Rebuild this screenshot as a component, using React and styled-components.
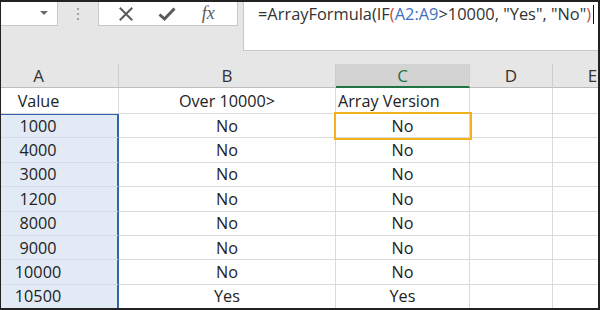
import React from "react";
import styled, { createGlobalStyle, css } from "styled-components";

const Global = createGlobalStyle`
  html, body { margin: 0; padding: 0; background: #ffffff; }
  * { box-sizing: border-box; }
`;

const Frame = styled.div`
  width: 600px;
  height: 310px;
  overflow: hidden;
  border-style: solid;
  border-color: #222;
  border-width: 2px 2px 2px 1px;
  background: #e6e6e6;
  font-family: "Open Sans", "Noto Sans", sans-serif;
  display: flex;
  flex-direction: column;
`;

const Toolbar = styled.div`
  height: 62px;
  flex: none;
  display: flex;
  align-items: flex-start;
  background: #e6e6e6;
`;

const NameBox = styled.div`
  width: 57px;
  height: 24px;
  background: #fff;
  border-right: 1px solid #c8c8c8;
  border-bottom: 1px solid #c8c8c8;
  display: flex;
  align-items: center;
  justify-content: flex-end;
  padding-right: 9px;
`;

const Caret = styled.span`
  width: 0;
  height: 0;
  border-left: 4px solid transparent;
  border-right: 4px solid transparent;
  border-top: 4px solid #6a6a6a;
  margin-top: -2px;
`;

const Grip = styled.div`
  width: 40px;
  height: 24px;
  display: flex;
  flex-direction: column;
  align-items: center;
  justify-content: center;
  gap: 3px;
`;

const Dot = styled.span`
  width: 2px;
  height: 2px;
  background: #a0a0a0;
`;

const FuncBox = styled.div`
  width: 140px;
  height: 24px;
  background: #fff;
  border: 1px solid #c8c8c8;
  border-top: none;
  display: flex;
  align-items: center;
  justify-content: space-around;
  padding: 0 8px 0 6px;
`;

const IconSlot = styled.span`
  display: flex;
  align-items: center;
  justify-content: center;
  width: 24px;
  height: 22px;
  color: #5a5a5a;
`;

const Fx = styled.span`
  font-family: "Liberation Serif", "DejaVu Serif", serif;
  font-style: italic;
  font-size: 18px;
  color: #5a5a5a;
  line-height: 1;
  margin-top: -2px;
`;

const FormulaBox = styled.div`
  flex: 1;
  margin-left: 5px;
  height: 49px;
  background: #fff;
  border-left: 1px solid #c8c8c8;
  border-bottom: 1px solid #c8c8c8;
  padding: 1px 0 0 14px;
  font-size: 16.4px;
  line-height: 22px;
  color: #333;
  white-space: nowrap;
  display: flex;
  align-items: flex-start;
`;

const Tok = styled.span`
  color: ${(p) => p.$c || "#333"};
`;

const Cursor = styled.span`
  display: inline-block;
  width: 1px;
  height: 19px;
  background: #111;
  margin: 2px 0 0 2px;
`;

const Sheet = styled.div`
  flex: 1;
  display: grid;
  grid-template-columns: 118px 217px 134px 83px 80px;
  grid-template-rows: 24px 26px repeat(8, 24.4px);
  background: #fff;
  overflow: hidden;
`;

const ColHead = styled.div`
  background: ${(p) => (p.$active ? "#d3d3d3" : "#e6e6e6")};
  border-right: 1px solid #cdcdcd;
  border-bottom: ${(p) => (p.$active ? "2px solid #217346" : "1px solid #bdbdbd")};
  color: ${(p) => (p.$active ? "#217346" : "#333")};
  font-size: 17px;
  display: flex;
  align-items: center;
  justify-content: center;
  padding-right: ${(p) => p.$pr || 0}px;
  padding-top: ${(p) => (p.$active ? 1 : 0)}px;
`;

const Cell = styled.div`
  position: relative;
  border-right: 1px solid #dadada;
  border-bottom: 1px solid #dadada;
  font-size: 16.2px;
  color: #222;
  display: flex;
  align-items: center;
  justify-content: ${(p) => (p.$left ? "flex-start" : "center")};
  padding-left: ${(p) => (p.$left ? 2 : 0)}px;
  padding-right: ${(p) => p.$pr || 0}px;
  white-space: nowrap;
  ${(p) =>
    p.$sel &&
    css`
      background: #e2eaf5;
      border-right: 2px solid #3563a9;
      border-bottom-color: #d6dde8;
    `}
  ${(p) =>
    p.$selTop &&
    css`
      box-shadow: inset 0 1px 0 #3563a9;
    `}
  ${(p) =>
    p.$active &&
    css`
      z-index: 1;
      outline: 2.5px solid #f2b21e;
      outline-offset: 0px;
    `}
`;

const Cross = () => (
  <svg width="16" height="16" viewBox="0 0 16 16">
    <path d="M2.5 2.5 L13.5 13.5 M13.5 2.5 L2.5 13.5" stroke="currentColor" strokeWidth="2" strokeLinecap="square" fill="none" />
  </svg>
);

const Check = () => (
  <svg width="18" height="16" viewBox="0 0 18 16">
    <path d="M1.5 8.5 L6.5 13 L16.5 2.5" stroke="currentColor" strokeWidth="3" strokeLinejoin="miter" fill="none" />
  </svg>
);

const values = ["1000", "4000", "3000", "1200", "8000", "9000", "10000", "10500"];

export default function App() {
  return (
    <>
      <Global />
      <Frame>
        <Toolbar>
          <NameBox>
            <Caret />
          </NameBox>
          <Grip>
            <Dot />
            <Dot />
            <Dot />
          </Grip>
          <FuncBox>
            <IconSlot>
              <Cross />
            </IconSlot>
            <IconSlot>
              <Check />
            </IconSlot>
            <IconSlot>
              <Fx>fx</Fx>
            </IconSlot>
          </FuncBox>
          <FormulaBox>
            <span>
              <Tok>=ArrayFormula(IF</Tok>
              <Tok $c="#c0504d">(</Tok>
              <Tok $c="#3e6fc2">A2:A9</Tok>
              <Tok>&gt;10000, "Yes", "No"</Tok>
              <Tok $c="#c0504d">)</Tok>
            </span>
            <Cursor />
          </FormulaBox>
        </Toolbar>
        <Sheet>
          <ColHead $pr={42}>A</ColHead>
          <ColHead>B</ColHead>
          <ColHead $active>C</ColHead>
          <ColHead>D</ColHead>
          <ColHead>E</ColHead>

          <Cell $pr={42}>Value</Cell>
          <Cell>Over 10000&gt;</Cell>
          <Cell $left>Array Version</Cell>
          <Cell />
          <Cell />

          {values.map((v, i) => {
            const res = Number(v) > 10000 ? "Yes" : "No";
            return (
              <React.Fragment key={v}>
                <Cell $pr={42} $sel $selTop={i === 0}>
                  {v}
                </Cell>
                <Cell>{res}</Cell>
                <Cell $active={i === 0}>{res}</Cell>
                <Cell />
                <Cell />
              </React.Fragment>
            );
          })}
        </Sheet>
      </Frame>
    </>
  );
}
